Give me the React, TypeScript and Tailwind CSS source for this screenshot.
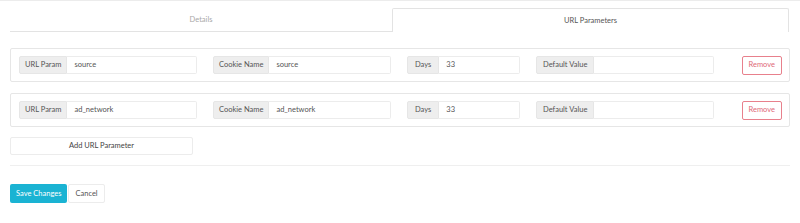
import React from "react";

const params = [
  { name: "source", cookie: "source", days: "33", value: "" },
  { name: "ad_network", cookie: "ad_network", days: "33", value: "" },
];

const Field = ({
  label,
  value,
  width,
  pad = "px-[5px]",
}: {
  label: string;
  value: string;
  width: string;
  pad?: string;
}) => {
  return (
    <div className={`flex h-[18px] ${width}`}>
      <span className={`flex items-center ${pad} bg-[#eeeeee] text-[#555] border border-[#e6e6e6] rounded-l-[2px] whitespace-nowrap`}>
        {label}
      </span>
      <input
        readOnly
        value={value}
        className="flex-1 min-w-0 px-[7px] border border-l-0 border-[#ececec] rounded-r-[2px] text-[#555] text-[7.5px] outline-none"
      />
    </div>
  );
};

const App = () => {
  return (
    <div className="w-[800px] h-[223px] bg-white border-t border-[#ececec] font-['Lato',sans-serif] text-[7.5px] text-[#555]">
      <div className="px-[10px]">
        {/* Tabs */}
        <div className="flex h-[24px] mt-[7px] pr-[1px]">
          <div className="w-[382px] flex items-center justify-center pt-[1px] border-b border-[#e3e3e3] text-[#a8a8a8]">
            Details
          </div>
          <div className="flex-1 flex items-center justify-center pt-[1px] border border-b-0 border-[#e3e3e3] rounded-t-[2px] text-[#555]">
            URL Parameters
          </div>
        </div>

        {/* Param rows */}
        <div className="flex flex-col gap-[11px] mt-[16px]">
          {params.map((p) => (
            <div
              key={p.name}
              className="flex items-center gap-[16px] h-[34px] pl-[8px] pr-[7px] border border-[#e6e6e6] rounded-[2px]"
            >
              <Field label="URL Param" value={p.name} width="w-[178px]" />
              <Field label="Cookie Name" value={p.cookie} width="w-[178px]" />
              <Field label="Days" value={p.days} width="w-[113px]" pad="px-[7px]" />
              <Field label="Default Value" value={p.value} width="w-[178px]" pad="px-[6px]" />
              <button className="ml-auto h-[19px] px-[6px] border border-[#e8808c] rounded-[2px] text-[#e06a78] bg-white">
                Remove
              </button>
            </div>
          ))}
        </div>

        <button className="mt-[10px] w-[183px] h-[18px] border border-[#ececec] rounded-[2px] bg-white text-[#444]">
          Add URL Parameter
        </button>

        <div className="mt-[10px] border-t border-[#efefef]" />

        {/* Actions */}
        <div className="flex gap-[1px] mt-[18px]">
          <button className="h-[19px] px-[6px] rounded-[2px] bg-[#1ab3d3] text-white">
            Save Changes
          </button>
          <button className="h-[19px] px-[6px] rounded-[2px] border border-[#ececec] bg-white text-[#555]">
            Cancel
          </button>
        </div>
      </div>
    </div>
  );
};

export default App;
